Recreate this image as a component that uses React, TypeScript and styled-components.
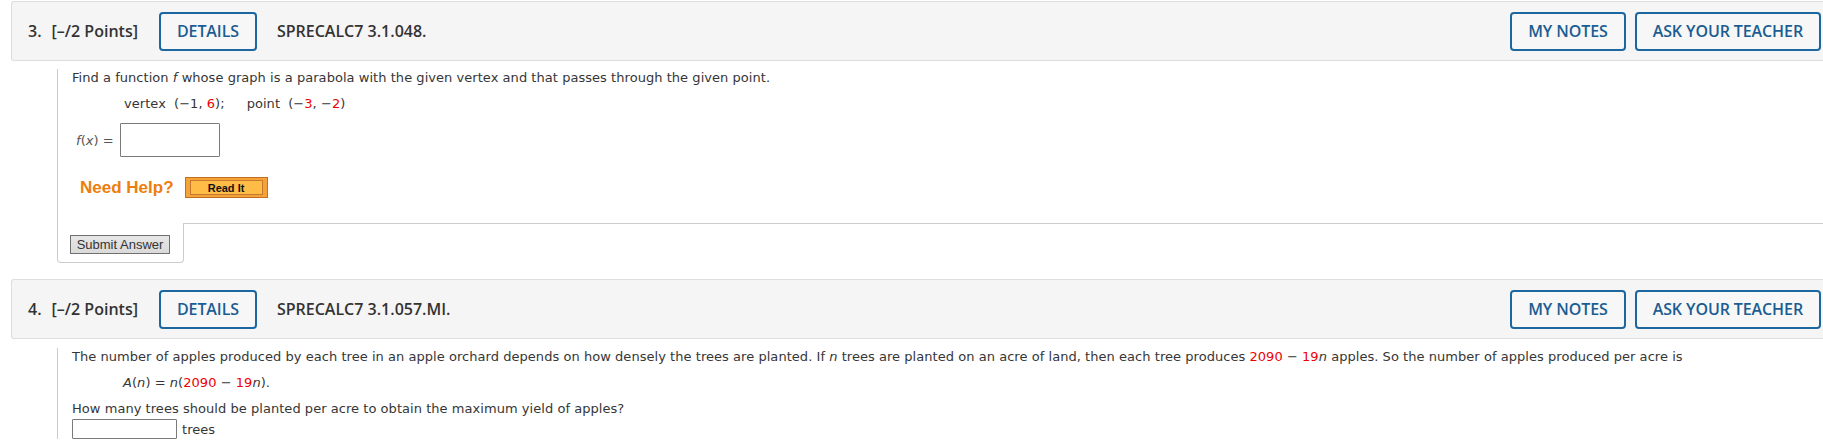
import React from 'react';
import styled, { createGlobalStyle } from 'styled-components';

const GlobalStyle = createGlobalStyle`
  html, body {
    margin: 0;
    padding: 0;
    background: #ffffff;
  }
`;

const Page = styled.div`
  padding: 1px 0 0 11px;
  width: 1812px;
`;

const Question = styled.section`
  margin-bottom: 16px;
`;

const Header = styled.div`
  display: flex;
  align-items: center;
  height: 58px;
  padding: 0 2px 0 16px;
  background: #f5f5f5;
  border: 1px solid #dedede;
  border-right: none;
  border-radius: 3px 0 0 3px;
  font-family: 'Open Sans', 'Liberation Sans', sans-serif;
  font-size: 16px;
  font-weight: 600;
  color: #333333;
`;

const Num = styled.span`
  margin-right: 10px;
`;

const Points = styled.span`
  margin-right: 21px;
`;

const Code = styled.span`
  flex: 1;
  margin-left: 20px;
`;

const OutlineButton = styled.button<{ $gap?: number }>`
  height: 39px;
  padding: 0 16px;
  margin-left: ${(p) => p.$gap ?? 0}px;
  background: #f7f7f7;
  border: 2px solid #1c679f;
  border-radius: 4px;
  color: #1b5d92;
  font-family: 'Open Sans', 'Liberation Sans', sans-serif;
  font-size: 16px;
  font-weight: 600;
  letter-spacing: -0.1px;
  cursor: pointer;
`;

const Body = styled.div`
  margin-left: 46px;
  border-left: 1px solid #cccccc;
  padding: 0 0 0 14px;
  font-family: 'DejaVu Sans', Verdana, sans-serif;
  font-size: 13px;
  letter-spacing: 0.045px;
  color: #363636;
`;

const Line = styled.div<{ $top?: number; $indent?: number }>`
  line-height: 18px;
  margin-top: ${(p) => p.$top ?? 8}px;
  padding-left: ${(p) => p.$indent ?? 0}px;
  white-space: nowrap;
`;

const Red = styled.span`
  color: #ee0000;
`;

const I = styled.i`
  font-style: italic;
`;

const Gap = styled.span<{ $w: number }>`
  display: inline-block;
  width: ${(p) => p.$w}px;
`;

const AnswerRow = styled.div<{ $top: number; $indent: number }>`
  display: flex;
  align-items: center;
  margin-top: ${(p) => p.$top}px;
  padding-left: ${(p) => p.$indent}px;
`;

const Label = styled.span`
  color: #555555;
  margin-right: 6px;
`;

const AnswerBox = styled.input<{ $w: number; $h: number }>`
  box-sizing: border-box;
  width: ${(p) => p.$w}px;
  height: ${(p) => p.$h}px;
  border: 1px solid #7a7a7a;
  border-radius: 1px;
  background: #ffffff;
  margin: 0;
  padding: 0 4px;
`;

const Unit = styled.span`
  margin-left: 5px;
`;

const HelpRow = styled.div`
  display: flex;
  align-items: center;
  margin-top: 20px;
  padding: 0 0 25px 8px;
`;

const NeedHelp = styled.span`
  font-family: 'Liberation Sans', Arial, sans-serif;
  font-weight: 700;
  font-size: 17px;
  letter-spacing: 0;
  color: #ec7e0e;
  margin-right: 11px;
`;

const ReadIt = styled.button`
  box-sizing: border-box;
  width: 83px;
  height: 21px;
  padding: 2px 4px;
  border: 1px solid #c16f1f;
  background: #f6a23b;
  cursor: pointer;
`;

const ReadItFace = styled.span`
  display: flex;
  align-items: center;
  justify-content: center;
  box-sizing: border-box;
  height: 15px;
  border: 1px solid #c47a2a;
  background: #ffbc47;
  font-family: 'Liberation Sans', Arial, sans-serif;
  font-weight: 700;
  font-size: 11px;
  color: #111111;
`;

const SubmitRow = styled.div`
  display: flex;
  margin-left: 46px;
`;

const SubmitTab = styled.div`
  padding: 12px 13px 8px 12px;
  border: 1px solid #cccccc;
  border-top: none;
  border-radius: 0 0 4px 4px;
`;

const SubmitFill = styled.div`
  flex: 1;
  border-top: 1px solid #cccccc;
`;

const SubmitButton = styled.button`
  display: block;
  box-sizing: border-box;
  width: 100px;
  height: 19px;
  padding: 0;
  border: 1px solid #707070;
  background: linear-gradient(#e6e6e6, #dadada);
  font-family: 'Liberation Sans', Arial, sans-serif;
  font-size: 13px;
  color: #333333;
  cursor: pointer;
`;

function QuestionHeader({ num, code }: { num: number; code: string }) {
  return (
    <Header>
      <Num>{num}.</Num>
      <Points>[–/2 Points]</Points>
      <OutlineButton>DETAILS</OutlineButton>
      <Code>{code}</Code>
      <OutlineButton>MY NOTES</OutlineButton>
      <OutlineButton $gap={9}>ASK YOUR TEACHER</OutlineButton>
    </Header>
  );
}

export default function App() {
  return (
    <Page>
      <GlobalStyle />
      <Question>
        <QuestionHeader num={3} code="SPRECALC7 3.1.048." />
        <Body>
          <Line $top={8}>
            Find a function <I>f</I> whose graph is a parabola with the given vertex and that passes through the given point.
          </Line>
          <Line $indent={52}>
            vertex <Gap $w={4} />(−1, <Red>6</Red>);<Gap $w={22} />point <Gap $w={4} />(−<Red>3</Red>, −<Red>2</Red>)
          </Line>
          <AnswerRow $top={10} $indent={4}>
            <Label>
              <I>f</I>(<I>x</I>) =
            </Label>
            <AnswerBox $w={100} $h={34} />
          </AnswerRow>
          <HelpRow>
            <NeedHelp>Need Help?</NeedHelp>
            <ReadIt>
              <ReadItFace>Read It</ReadItFace>
            </ReadIt>
          </HelpRow>
        </Body>
        <SubmitRow>
          <SubmitTab>
            <SubmitButton>Submit Answer</SubmitButton>
          </SubmitTab>
          <SubmitFill />
        </SubmitRow>
      </Question>
      <Question>
        <QuestionHeader num={4} code="SPRECALC7 3.1.057.MI." />
        <Body>
          <Line $top={9}>
            The number of apples produced by each tree in an apple orchard depends on how densely the trees are planted. If <I>n</I> trees are planted on an acre of land, then each tree produces <Red>2090</Red> − <Red>19</Red><I>n</I> apples. So the number of apples produced per acre is
          </Line>
          <Line $indent={51}>
            <I>A</I>(<I>n</I>) = <I>n</I>(<Red>2090</Red> − <Red>19</Red><I>n</I>).
          </Line>
          <Line>How many trees should be planted per acre to obtain the maximum yield of apples?</Line>
          <AnswerRow $top={1} $indent={0}>
            <AnswerBox $w={105} $h={20} />
            <Unit>trees</Unit>
          </AnswerRow>
        </Body>
      </Question>
    </Page>
  );
}
